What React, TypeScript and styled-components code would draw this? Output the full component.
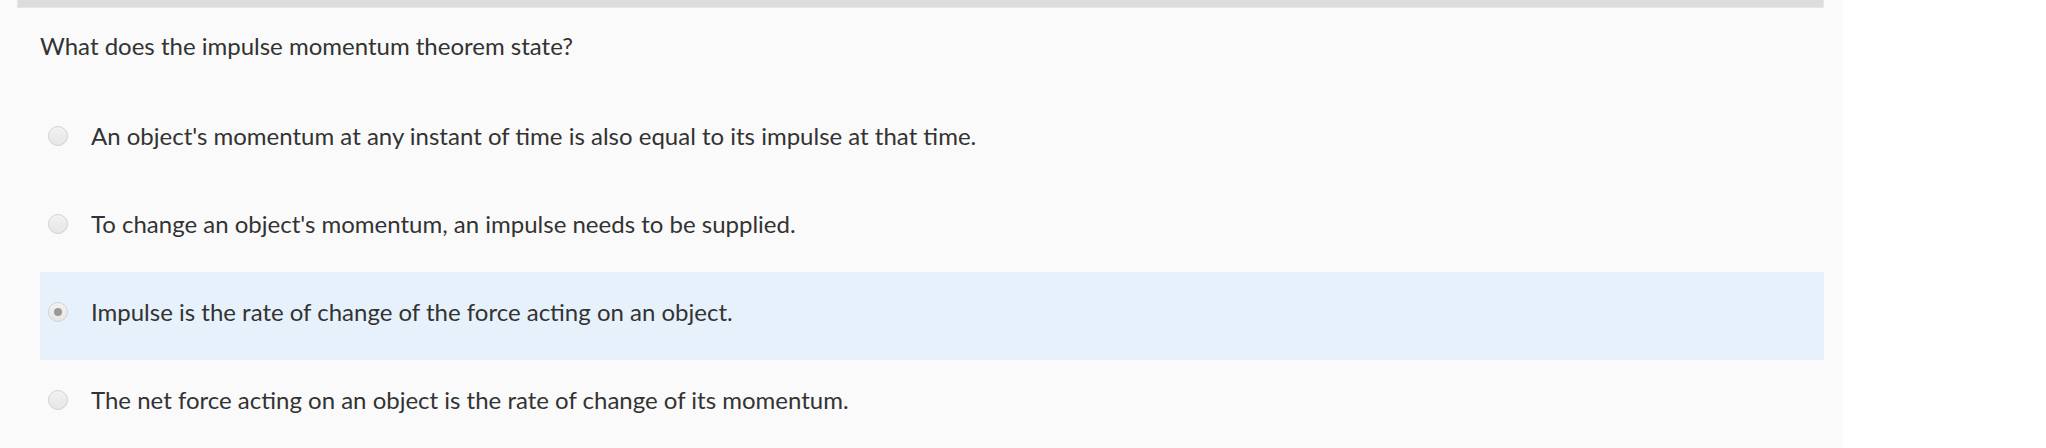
import React, { useState } from 'react';
import styled, { createGlobalStyle } from 'styled-components';

const text = '#333333';

const options = [
  "An object's momentum at any instant of time is also equal to its impulse at that time.",
  "To change an object's momentum, an impulse needs to be supplied.",
  'Impulse is the rate of change of the force acting on an object.',
  'The net force acting on an object is the rate of change of its momentum.',
];

export default function App() {
  const [selected, setSelected] = useState(2);

  return (
    <>
      <GlobalStyle />
      <Panel>
        <TopBar />
        <Question>What does the impulse momentum theorem state?</Question>
        <OptionList>
          {options.map((label, i) => (
            <Option key={i} $active={i === selected} onClick={() => setSelected(i)}>
              <Radio $checked={i === selected} />
              <Label>{label}</Label>
            </Option>
          ))}
        </OptionList>
      </Panel>
    </>
  );
}

const GlobalStyle = createGlobalStyle`
  body {
    margin: 0;
    background: #ffffff;
    font-family: Lato, "Open Sans", sans-serif;
  }
`;

const Panel = styled.div`
  width: 1843px;
  height: 448px;
  background: #fafafa;
  display: flex;
  flex-direction: column;
  overflow: hidden;
`;

const TopBar = styled.div`
  margin-left: 17px;
  width: 1807px;
  height: 8px;
  box-sizing: border-box;
  background: #dcdcdc;
  border: 1px solid #e6e6e6;
  border-top: none;
`;

const Question = styled.div`
  height: 88px;
  box-sizing: border-box;
  padding: 22px 0 0 40px;
  color: ${text};
  font-size: 24px;
  line-height: 32px;
`;

const OptionList = styled.div`
  margin-left: 40px;
  width: 1784px;
  display: flex;
  flex-direction: column;
`;

const Option = styled.label<{ $active: boolean }>`
  height: 88px;
  box-sizing: border-box;
  padding: 0 0 8px 8px;
  display: flex;
  align-items: center;
  gap: 23px;
  cursor: pointer;
  background: ${(p) => (p.$active ? '#e7f1fb' : 'transparent')};
`;

const Radio = styled.span<{ $checked: boolean }>`
  width: 20px;
  height: 20px;
  flex: none;
  box-sizing: border-box;
  border-radius: 50%;
  border: 1px solid #d2d2d2;
  background: linear-gradient(#f2f2f2, #e6e6e6);
  display: flex;
  align-items: center;
  justify-content: center;

  &::after {
    content: '';
    width: 8px;
    height: 8px;
    border-radius: 50%;
    background: #9a9a9a;
    display: ${(p) => (p.$checked ? 'block' : 'none')};
  }
`;

const Label = styled.span`
  color: ${text};
  font-size: 24px;
  line-height: 32px;
`;
